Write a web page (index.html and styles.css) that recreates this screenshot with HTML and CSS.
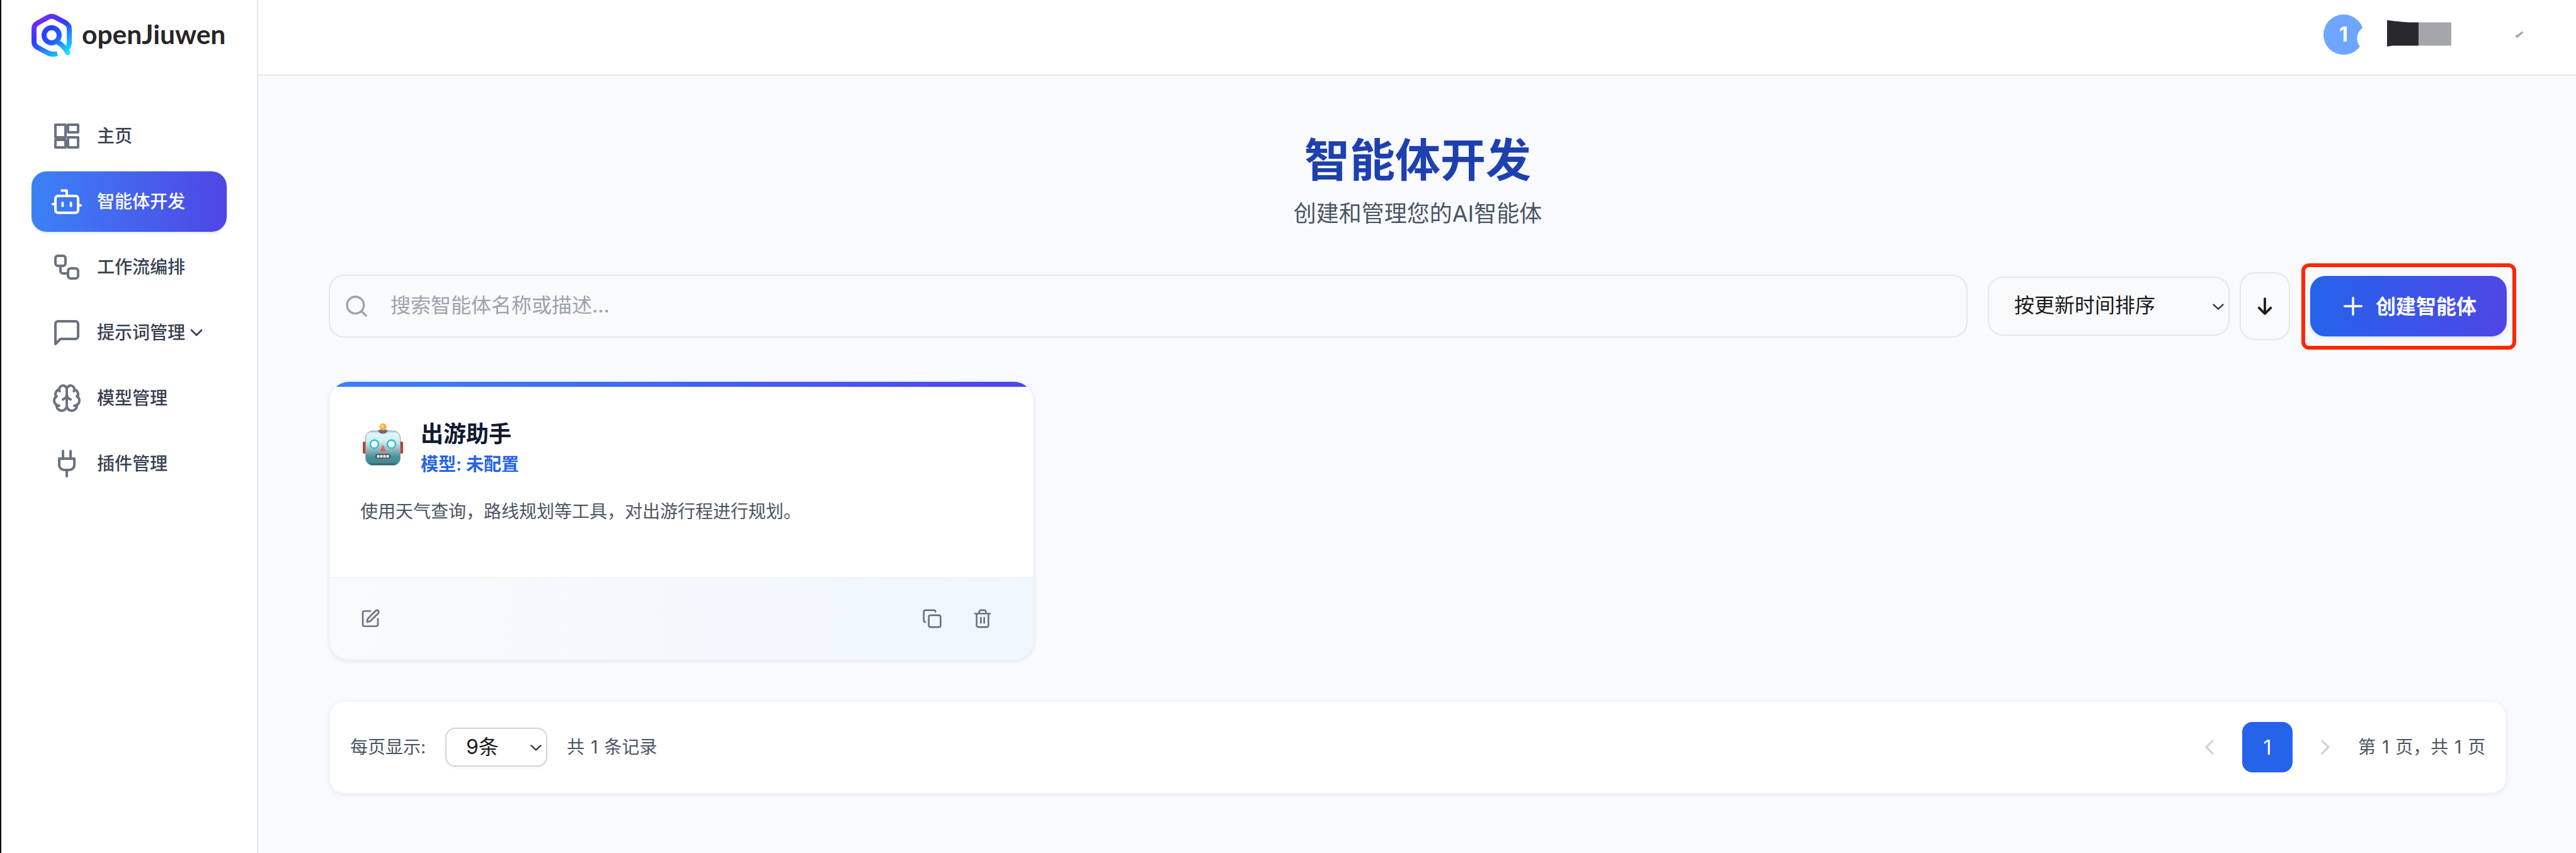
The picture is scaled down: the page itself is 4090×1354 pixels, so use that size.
FILE: index.html
```html
<!DOCTYPE html>
<html lang="zh-CN">
<head>
    <meta charset="UTF-8">
    <meta name="viewport" content="width=device-width, initial-scale=1.0">
    <title>智能体开发 - openJiuwen</title>
    <link rel="stylesheet" href="styles.css">
</head>
<body>
    <aside class="sidebar">
        <div class="logo">
            <svg class="logo-mark" viewBox="0 0 64 68" fill="none">
                <defs>
                    <linearGradient id="logoHex" x1="10" y1="6" x2="46" y2="66" gradientUnits="userSpaceOnUse">
                        <stop offset="0" stop-color="#7a2bff"/>
                        <stop offset="0.45" stop-color="#2b3dff"/>
                        <stop offset="1" stop-color="#1cc8ff"/>
                    </linearGradient>
                    <linearGradient id="logoSide" x1="54" y1="12" x2="58" y2="64" gradientUnits="userSpaceOnUse">
                        <stop offset="0" stop-color="#3038f0"/>
                        <stop offset="0.4" stop-color="#2190ff"/>
                        <stop offset="1" stop-color="#18e4ff"/>
                    </linearGradient>
                    <linearGradient id="logoTail" x1="24" y1="24" x2="58" y2="62" gradientUnits="userSpaceOnUse">
                        <stop offset="0" stop-color="#2b3dff"/>
                        <stop offset="0.4" stop-color="#2458ff"/>
                        <stop offset="1" stop-color="#18e4ff"/>
                    </linearGradient>
                </defs>
                <path d="M54 14L38 5.500Q32 2.500 26 5.500L9 15Q4 18 4 24V44Q4 50 9 53L26 62Q32 65.500 41 63" stroke="url(#logoHex)" stroke-width="8"/>
                <path d="M52 13Q60 17 60 24V45Q60 51 56 56" stroke="url(#logoSide)" stroke-width="8"/>
                <path d="M43 46Q51 50 57.500 61.500" stroke="url(#logoTail)" stroke-width="8" stroke-linecap="round"/>
                <circle cx="32" cy="34" r="12" stroke="url(#logoTail)" stroke-width="8"/>
            </svg>
            <span class="logo-text">openJiuwen</span>
        </div>
        <nav class="menu">
            <a class="menu-item">
                <svg class="icon" viewBox="0 0 24 24"><rect x="3" y="3" width="8" height="10"/><rect x="13" y="3" width="8" height="6"/><rect x="13" y="13" width="8" height="8"/><rect x="3" y="15" width="8" height="6"/></svg>
                <span>主页</span>
            </a>
            <a class="menu-item active">
                <svg class="icon" viewBox="0 0 24 24"><path d="M12 7.500V3.200H8"/><rect x="3" y="7.500" width="18" height="13.400" rx="2"/><path d="M1 14h2M21 15h2M15.300 13v2.400M8.700 13v2.400"/></svg>
                <span>智能体开发</span>
            </a>
            <a class="menu-item">
                <svg class="icon" viewBox="0 0 24 24"><rect x="3" y="3" width="8" height="8" rx="2"/><path d="M7 11v4a2 2 0 0 0 2 2h4"/><rect x="13" y="13" width="8" height="8" rx="2"/></svg>
                <span>工作流编排</span>
            </a>
            <a class="menu-item">
                <svg class="icon" viewBox="0 0 24 24"><path d="M21 15a2 2 0 0 1-2 2H7l-4 4V5a2 2 0 0 1 2-2h14a2 2 0 0 1 2 2z"/></svg>
                <span>提示词管理</span>
                <svg class="menu-arrow" viewBox="0 0 24 24"><path d="m6 9 6 6 6-6"/></svg>
            </a>
            <a class="menu-item">
                <svg class="icon" viewBox="0 0 24 24"><path d="M12 5a3 3 0 1 0-5.997.125 4 4 0 0 0-2.526 5.770 4 4 0 0 0 .556 6.588A4 4 0 1 0 12 18Z"/><path d="M12 5a3 3 0 1 1 5.997.125 4 4 0 0 1 2.526 5.770 4 4 0 0 1-.556 6.588A4 4 0 1 1 12 18Z"/><path d="M15 13a4.500 4.500 0 0 1-3-4 4.500 4.500 0 0 1-3 4"/><path d="M17.599 6.500a3 3 0 0 0 .399-1.375M6.003 5.125A3 3 0 0 0 6.401 6.500M3.477 10.896a4 4 0 0 1 .585-.396M19.938 10.500a4 4 0 0 1 .585.396M6 18a4 4 0 0 1-1.967-.516M19.967 17.484A4 4 0 0 1 18 18"/></svg>
                <span>模型管理</span>
            </a>
            <a class="menu-item">
                <svg class="icon" viewBox="0 0 24 24"><path d="M12 22v-5M9 8V2M15 8V2M18 8v5a4 4 0 0 1-4 4h-4a4 4 0 0 1-4-4V8Z"/></svg>
                <span>插件管理</span>
            </a>
        </nav>
    </aside>

    <div class="page">
        <header class="topbar">
            <div class="avatar">1</div>
            <svg class="user-name" viewBox="0 0 102 42">
                <path d="M0 0Q24 3 34 3.500H50V40.500H8L0 42Z" fill="#29282d"/>
                <rect x="50" y="3.500" width="52" height="37" fill="#a5a6aa"/>
            </svg>
            <svg class="user-arrow" viewBox="0 0 14 12"><path d="M3 7.500v2L11.500 2.500"/></svg>
        </header>

        <main class="content">
            <div class="title-block">
                <h1>智能体开发</h1>
                <p>创建和管理您的AI智能体</p>
            </div>

            <div class="toolbar">
                <div class="search">
                    <svg class="search-icon" viewBox="0 0 24 24"><circle cx="11" cy="11" r="8"/><path d="m21 21-4.300-4.300"/></svg>
                    <input type="text" placeholder="搜索智能体名称或描述...">
                </div>
                <div class="select sort-select">
                    <select>
                        <option>按更新时间排序</option>
                    </select>
                    <svg class="select-arrow" viewBox="0 0 18 10"><path d="M1.500 1.500 9 8.500l7.500-7"/></svg>
                </div>
                <button class="order-btn">
                    <svg viewBox="0 0 24 24"><path d="M12 3v18M5 14l7 7 7-7"/></svg>
                </button>
                <div class="create-wrap">
                    <button class="create-btn">
                        <svg viewBox="0 0 24 24"><path d="M2 12h20M12 2v20"/></svg>
                        <span>创建智能体</span>
                    </button>
                </div>
            </div>

            <div class="card">
                <div class="card-bar"></div>
                <div class="card-body">
                    <div class="card-head">
                        <svg class="robot" viewBox="0 0 64 68">
                            <defs>
                                <linearGradient id="robotFace" x1="0" y1="0" x2="0" y2="1">
                                    <stop offset="0" stop-color="#b5cbcb"/>
                                    <stop offset="0.080" stop-color="#def6f7"/>
                                    <stop offset="0.300" stop-color="#d3eeef"/>
                                    <stop offset="0.500" stop-color="#9fc3c6"/>
                                    <stop offset="0.750" stop-color="#4b909a"/>
                                    <stop offset="0.920" stop-color="#468994"/>
                                    <stop offset="1" stop-color="#264e58"/>
                                </linearGradient>
                            </defs>
                            <rect x="0" y="29" width="5" height="19" rx="2" fill="#b8403c"/>
                            <rect x="59" y="29" width="5" height="19" rx="2" fill="#b8403c"/>
                            <rect x="4.500" y="12" width="55" height="54.500" rx="11" fill="url(#robotFace)" stroke="#86a5a8"/>
                            <path d="M24 11Q32 8 40 11Q38 16.500 32 16.500T24 11Z" fill="#6d6788"/>
                            <circle cx="32" cy="5.500" r="5.500" fill="#ffac33"/>
                            <circle cx="31" cy="4.500" r="2.800" fill="#ffd76a"/>
                            <circle cx="18.500" cy="33" r="6.500" fill="#f4fafc" stroke="#2ec0dc" stroke-width="2.500"/>
                            <circle cx="45.500" cy="33" r="6.500" fill="#f4fafc" stroke="#2ec0dc" stroke-width="2.500"/>
                            <path d="M32 34L37 44.500H27Z" fill="#e2625c"/>
                            <rect x="20" y="48.500" width="24" height="7.500" rx="3.700" fill="#4a4a4f"/>
                            <path d="M22.500 50.200h4v4.200h-4zM27.500 50.200h4v4.200h-4zM32.500 50.200h4v4.200h-4zM37.500 50.200h4v4.200h-4z" fill="#f2f2f2"/>
                        </svg>
                        <div>
                            <h3>出游助手</h3>
                            <div class="model">模型: 未配置</div>
                        </div>
                    </div>
                    <p class="desc">使用天气查询，路线规划等工具，对出游行程进行规划。</p>
                </div>
                <div class="card-footer">
                    <svg class="action" viewBox="0 0 24 24"><path d="M12 3H5a2 2 0 0 0-2 2v14a2 2 0 0 0 2 2h14a2 2 0 0 0 2-2v-7"/><path d="M18.375 2.625a1 1 0 0 1 3 3l-9.013 9.014a2 2 0 0 1-.853.505l-2.873.840a.5.5 0 0 1-.620-.620l.840-2.873a2 2 0 0 1 .506-.852z"/></svg>
                    <div class="actions-right">
                        <svg class="action" viewBox="0 0 24 24"><rect x="8" y="8" width="14" height="14" rx="2"/><path d="M4 16c-1.100 0-2-.9-2-2V4c0-1.100.9-2 2-2h10c1.100 0 2 .9 2 2"/></svg>
                        <svg class="action" viewBox="0 0 24 24"><path d="M3 6h18M19 6v14c0 1-1 2-2 2H7c-1 0-2-1-2-2V6M8 6V4c0-1 1-2 2-2h4c1 0 2 1 2 2v2M10 11v6M14 11v6"/></svg>
                    </div>
                </div>
            </div>

            <div class="pagination">
                <span class="page-label">每页显示:</span>
                <div class="select size-select">
                    <select>
                        <option>9条</option>
                    </select>
                    <svg class="select-arrow" viewBox="0 0 18 10"><path d="M1.500 1.500 9 8.500l7.500-7"/></svg>
                </div>
                <span class="total">共 1 条记录</span>
                <div class="pager">
                    <svg class="pager-arrow" viewBox="0 0 24 24"><path d="m15 18-6-6 6-6"/></svg>
                    <button class="pager-current">1</button>
                    <svg class="pager-arrow" viewBox="0 0 24 24"><path d="m9 18 6-6-6-6"/></svg>
                </div>
                <span class="page-info">第 1 页，共 1 页</span>
            </div>
        </main>
    </div>
</body>
</html>
```

FILE: styles.css
```css
* {
    box-sizing: border-box;
}

body {
    margin: 0;
    display: flex;
    height: 1354px;
    overflow: hidden;
    background-color: #f8fafe;
    font-family: Inter, "Noto Sans CJK SC", sans-serif;
    font-size: 28px;
    color: #374151;
}

h1, h3, p {
    margin: 0;
}

svg {
    display: block;
    flex-shrink: 0;
    fill: none;
    stroke-linecap: round;
    stroke-linejoin: round;
}

button, select, input {
    font-family: inherit;
    font-size: 32px;
    margin: 0;
}

/* Sidebar */
.sidebar {
    width: 410px;
    flex-shrink: 0;
    background-color: #fff;
    border-left: 2px solid #000;
    border-right: 2px solid #e5e7eb;
    padding: 0 48px;
}

.logo {
    display: flex;
    gap: 16px;
    height: 168px;
    padding-top: 22px;
}

.logo-mark {
    width: 64px;
    height: 68px;
    stroke-linecap: butt;
}

.logo-text {
    font-family: Lato, sans-serif;
    font-size: 42.5px;
    font-weight: 700;
    line-height: 64px;
    color: #262626;
}

.menu {
    display: flex;
    flex-direction: column;
    gap: 8px;
}

.menu-item {
    display: flex;
    align-items: center;
    height: 96px;
    width: 310px;
    padding-left: 32px;
    border-radius: 24px;
    font-weight: 500;
    white-space: nowrap;
}

.menu-item span {
    margin-left: 24px;
    padding-bottom: 4px;
}

.menu-item.active {
    background-image: linear-gradient(to right, #3b82f6, #4f46e5);
    box-shadow: 0 2px 4px rgba(59, 130, 246, 0.2);
    color: #fff;
}

.icon {
    width: 48px;
    height: 48px;
    stroke: #6b7280;
    stroke-width: 2;
}

.active .icon {
    stroke: #fff;
}

.menu-arrow {
    width: 32px;
    height: 32px;
    margin-left: 2px;
    stroke: #374151;
    stroke-width: 2;
}

/* Top bar */
.page {
    flex: 1;
}

.topbar {
    display: flex;
    height: 120px;
    padding-left: 3279px;
    background-color: #fff;
    border-bottom: 2px solid #e5e7eb;
}

.avatar {
    width: 64px;
    height: 64px;
    margin-top: 23px;
    border-radius: 50%;
    background: radial-gradient(circle at 74px 38px, #fff 20px, #6ea6ff 21px);
    color: #fff;
    font-size: 32px;
    font-weight: 700;
    line-height: 64px;
    text-align: center;
}

.user-name {
    width: 102px;
    height: 42px;
    margin: 32px 0 0 37px;
}

.user-arrow {
    width: 14px;
    height: 12px;
    margin: 49px 0 0 101px;
    stroke: #9ca3af;
    stroke-width: 3;
}

/* Content */
.content {
    padding: 94px 110px 0 112px;
}

.title-block {
    text-align: center;
}

.title-block h1 {
    font-size: 72px;
    line-height: 80px;
    color: #1e40af;
}

.title-block p {
    margin-top: 17px;
    font-size: 36px;
    line-height: 56px;
    color: #4b5563;
}

.toolbar {
    display: flex;
    align-items: center;
    height: 108px;
    margin-top: 65px;
}

.search {
    display: flex;
    align-items: center;
    width: 2602px;
    height: 100px;
    padding-left: 22px;
    background-color: #f9fafb;
    border: 2px solid #e5e7eb;
    border-radius: 24px;
}

.search-icon {
    width: 40px;
    height: 40px;
    stroke: #9ca3af;
    stroke-width: 2;
}

.search input {
    flex: 1;
    padding: 0 0 3px;
    margin-left: 34px;
    border: none;
    outline: none;
    background: none;
}

.search input::placeholder {
    color: #9ca3af;
}

.select {
    position: relative;
}

.select select {
    appearance: none;
    width: 100%;
    height: 100%;
    outline: none;
    color: #1a1a1a;
}

.select-arrow {
    position: absolute;
    top: 50%;
    right: 9px;
    width: 18px;
    height: 10px;
    margin-top: -4px;
    stroke: #222;
    stroke-width: 2.2;
}

.sort-select {
    width: 384px;
    height: 94px;
    margin-left: 32px;
}

.sort-select select {
    padding: 0 40px 3px;
    background-color: #f9fafb;
    border: 2px solid #e5e7eb;
    border-radius: 24px;
}

.order-btn {
    display: flex;
    align-items: center;
    justify-content: center;
    width: 80px;
    height: 108px;
    margin-left: 16px;
    padding: 0;
    background-color: #f9fafb;
    border: 2px solid #e5e7eb;
    border-radius: 24px;
}

.order-btn svg {
    width: 32px;
    height: 32px;
    stroke: #1a1a1a;
    stroke-width: 2.8;
}

/* Highlight frame round the create button */
.create-wrap {
    width: 341px;
    height: 137px;
    margin-left: 18px;
    margin-right: -15px;
    padding: 14px 8px;
    border: 6px solid #ff2600;
    border-radius: 12px;
}

.create-btn {
    display: flex;
    align-items: center;
    width: 312px;
    height: 96px;
    padding: 0 0 0 52px;
    border: none;
    border-radius: 24px;
    background-image: linear-gradient(to right, #2563eb, #4f46e5);
    box-shadow: 0 2px 6px rgba(0, 0, 0, 0.1);
    color: #fff;
    font-weight: 700;
    white-space: nowrap;
}

.create-btn span {
    padding-bottom: 4px;
}

.create-btn svg {
    width: 32px;
    height: 32px;
    margin-right: 20px;
    stroke: #fff;
    stroke-width: 2.6;
}

/* Agent card */
.card {
    width: 1120px;
    height: 444px;
    margin-top: 64px;
    display: flex;
    flex-direction: column;
    overflow: hidden;
    background-color: #fff;
    border: 2px solid #f3f4f6;
    border-radius: 32px;
    box-shadow: 0 2px 6px rgba(0, 0, 0, 0.08);
}

.card-bar {
    height: 8px;
    background-image: linear-gradient(to right, #3b82f6, #4f46e5);
}

.card-body {
    flex: 1;
    padding: 51px 48px 0;
}

.card-head {
    display: flex;
    gap: 28px;
}

.robot {
    width: 64px;
    height: 68px;
    margin: 7px 0 0 4px;
}

.card h3 {
    font-size: 36px;
    line-height: 48px;
    color: #111a30;
}

.model {
    line-height: 44px;
    margin-top: 2px;
    font-weight: 600;
    color: #2563eb;
}

.desc {
    margin-top: 29px;
    line-height: 48px;
    color: #4b5563;
}

.card-footer {
    display: flex;
    align-items: center;
    justify-content: space-between;
    height: 130px;
    padding: 0 64px 0 48px;
    border-top: 2px solid #f3f4f6;
    background-image: linear-gradient(to right, #f9fafb, #eff6ff);
}

.actions-right {
    display: flex;
    gap: 48px;
}

.action {
    width: 32px;
    height: 32px;
    stroke: #6b7280;
    stroke-width: 2;
}

/* Pagination */
.pagination {
    display: flex;
    align-items: center;
    height: 148px;
    margin-top: 64px;
    padding: 0 32px;
    background-color: #fff;
    border: 2px solid #f3f4f6;
    border-radius: 24px;
    box-shadow: 0 2px 6px rgba(0, 0, 0, 0.06);
    color: #4b5563;
    white-space: nowrap;
    word-spacing: 2px;
}

.pagination > span {
    padding-bottom: 4px;
}

.page-label {
    width: 119px;
}

.size-select {
    width: 162px;
    height: 62px;
    margin: 0 31px 0 32px;
}

.size-select select {
    padding: 0 31px 2px;
    background-color: #fff;
    border: 2px solid #d1d5db;
    border-radius: 16px;
    box-shadow: 0 2px 4px rgba(0, 0, 0, 0.05);
}

.pager {
    display: flex;
    align-items: center;
    margin-left: auto;
}

.pager-arrow {
    width: 40px;
    height: 40px;
    stroke: #d1d5db;
    stroke-width: 2;
}

.pager-current {
    width: 80px;
    height: 80px;
    margin: 0 32px;
    padding: 0;
    border: none;
    border-radius: 16px;
    background-color: #2563eb;
    color: #fff;
}

.page-info {
    width: 202px;
    margin-left: 32px;
}
```
